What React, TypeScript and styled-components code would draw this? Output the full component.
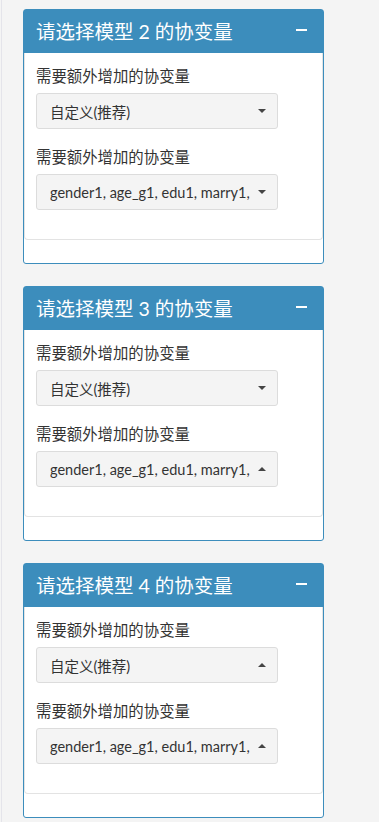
import React from "react";
import styled, { createGlobalStyle } from "styled-components";

const Global = createGlobalStyle`
  html, body { margin: 0; padding: 0; background: #f4f4f4; }
  body { font-family: Lato, "Noto Sans CJK SC", sans-serif; color: #333; }
  * { box-sizing: border-box; }
`;

const Page = styled.div`
  min-height: 100vh;
  margin-left: 1px;
  border-left: 1px solid #e4e4ea;
  padding: 9px 0 20px 21px;
  display: flex;
  flex-direction: column;
  gap: 22px;
`;

const Box = styled.section`
  width: 301px;
  border: 1px solid #3c8dbc;
  border-radius: 3px;
  background: #fff;
  padding-bottom: 23px;
`;

const Header = styled.div`
  height: 43px;
  background: #3c8dbc;
  display: flex;
  align-items: center;
  justify-content: space-between;
  padding: 0 16px 2px 12px;
`;

const Title = styled.h3`
  margin: 0;
  font-size: 19.5px;
  font-weight: 400;
  color: #fff;
  font-family: Lato, "Noto Sans CJK SC", sans-serif;
`;

const Minus = styled.span`
  width: 11px;
  height: 2px;
  background: #fff;
  margin-top: -2px;
`;

const Well = styled.div`
  border: 1px solid #e3e3e3;
  border-top: none;
  border-radius: 0 0 4px 4px;
  padding: 12px 11px 12px 11px;
`;

const Group = styled.div`
  display: flex;
  flex-direction: column;
  gap: 6px;
  margin-bottom: 17px;
`;

const Label = styled.label`
  font-size: 15.4px;
  line-height: 22px;
  color: #333;
`;

const Select = styled.div`
  width: 242px;
  height: 36px;
  background: #f4f4f4;
  border: 1px solid #dcdcdc;
  border-radius: 3px;
  display: flex;
  align-items: center;
  justify-content: space-between;
  padding: 0 11px 0 13px;
  font-size: 14.5px;
  color: #333;
  white-space: nowrap;
  overflow: hidden;
`;

const Value = styled.span`
  overflow: hidden;
`;

const Caret = styled.span<{ $up?: boolean }>`
  flex: none;
  width: 0;
  height: 0;
  margin-left: 4px;
  border-left: 4px solid transparent;
  border-right: 4px solid transparent;
  ${(p) =>
    p.$up
      ? "border-bottom: 4px solid #444;"
      : "border-top: 4px solid #444;"}
`;

const boxes = [
  { n: 2, up1: false, up2: false },
  { n: 3, up1: false, up2: true },
  { n: 4, up1: true, up2: true },
];

export default function App() {
  return (
    <>
      <Global />
      <Page>
        {boxes.map((b) => (
          <Box key={b.n}>
            <Header>
              <Title>请选择模型 {b.n} 的协变量</Title>
              <Minus />
            </Header>
            <Well>
              <Group>
                <Label>需要额外增加的协变量</Label>
                <Select>
                  <Value>自定义(推荐)</Value>
                  <Caret $up={b.up1} />
                </Select>
              </Group>
              <Group>
                <Label>需要额外增加的协变量</Label>
                <Select>
                  <Value>gender1, age_g1, edu1, marry1,</Value>
                  <Caret $up={b.up2} />
                </Select>
              </Group>
            </Well>
          </Box>
        ))}
      </Page>
    </>
  );
}
